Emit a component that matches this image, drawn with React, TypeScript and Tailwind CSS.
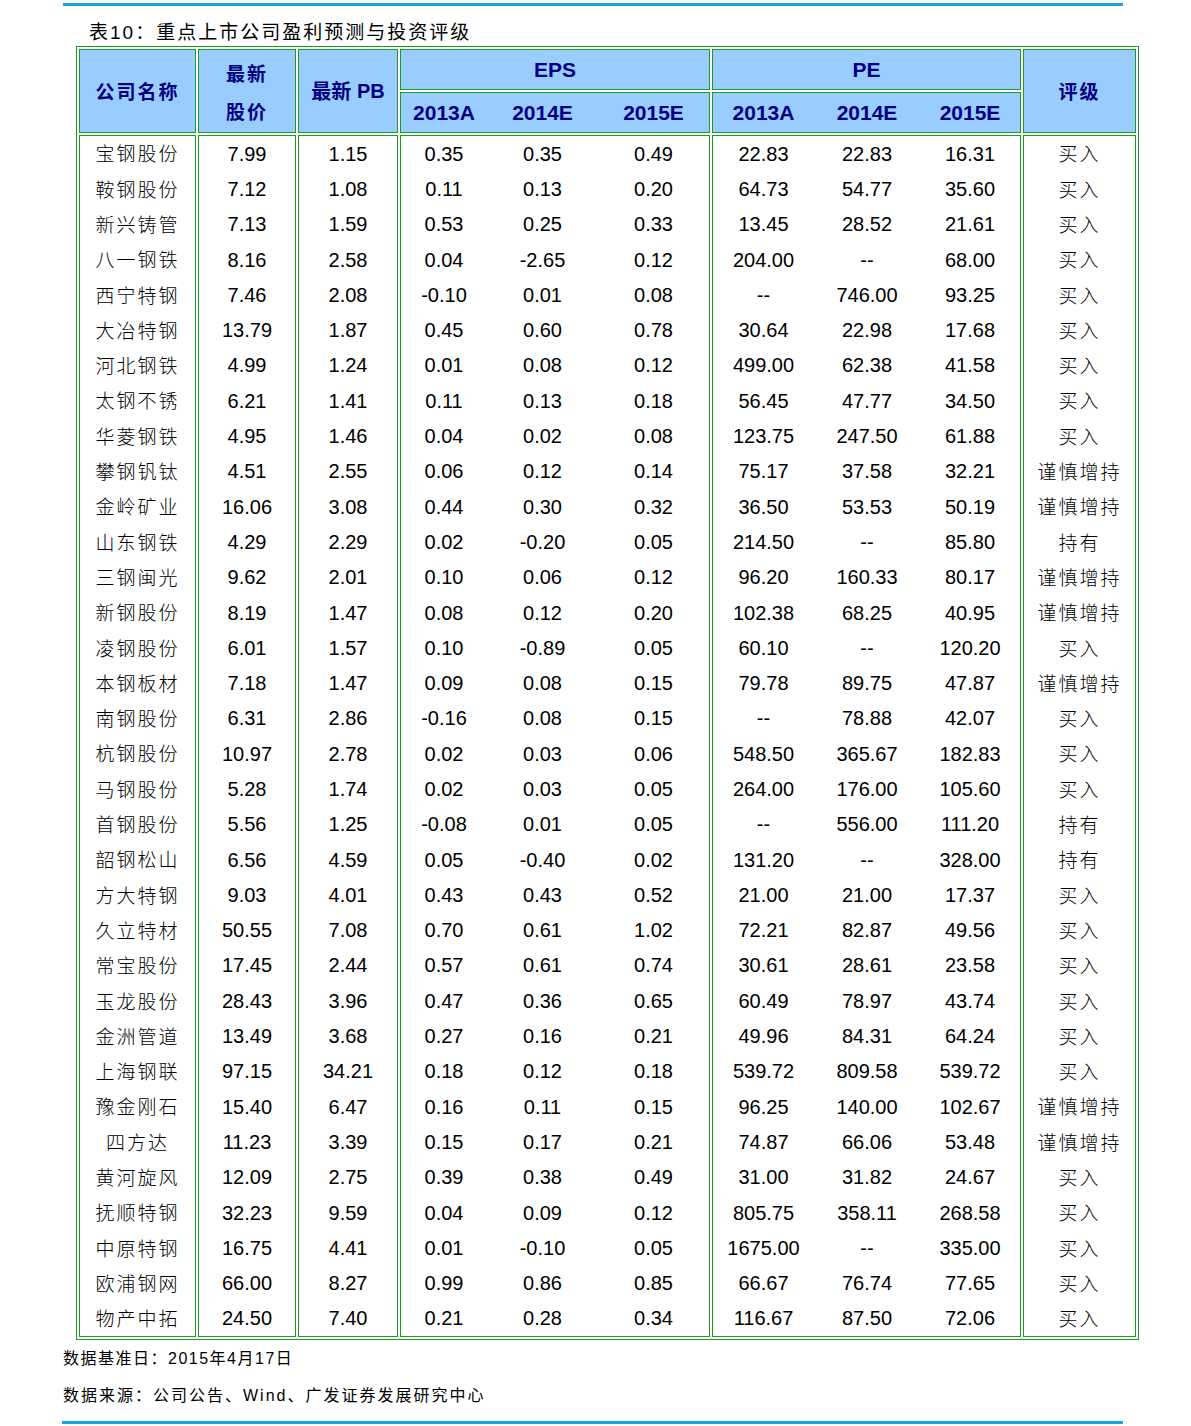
type Row = [string, string, string, string, string, string, string, string, string, string];

const rows: Row[] = [
    ['宝钢股份', '7.99', '1.15', '0.35', '0.35', '0.49', '22.83', '22.83', '16.31', '买入'],
    ['鞍钢股份', '7.12', '1.08', '0.11', '0.13', '0.20', '64.73', '54.77', '35.60', '买入'],
    ['新兴铸管', '7.13', '1.59', '0.53', '0.25', '0.33', '13.45', '28.52', '21.61', '买入'],
    ['八一钢铁', '8.16', '2.58', '0.04', '-2.65', '0.12', '204.00', '--', '68.00', '买入'],
    ['西宁特钢', '7.46', '2.08', '-0.10', '0.01', '0.08', '--', '746.00', '93.25', '买入'],
    ['大冶特钢', '13.79', '1.87', '0.45', '0.60', '0.78', '30.64', '22.98', '17.68', '买入'],
    ['河北钢铁', '4.99', '1.24', '0.01', '0.08', '0.12', '499.00', '62.38', '41.58', '买入'],
    ['太钢不锈', '6.21', '1.41', '0.11', '0.13', '0.18', '56.45', '47.77', '34.50', '买入'],
    ['华菱钢铁', '4.95', '1.46', '0.04', '0.02', '0.08', '123.75', '247.50', '61.88', '买入'],
    ['攀钢钒钛', '4.51', '2.55', '0.06', '0.12', '0.14', '75.17', '37.58', '32.21', '谨慎增持'],
    ['金岭矿业', '16.06', '3.08', '0.44', '0.30', '0.32', '36.50', '53.53', '50.19', '谨慎增持'],
    ['山东钢铁', '4.29', '2.29', '0.02', '-0.20', '0.05', '214.50', '--', '85.80', '持有'],
    ['三钢闽光', '9.62', '2.01', '0.10', '0.06', '0.12', '96.20', '160.33', '80.17', '谨慎增持'],
    ['新钢股份', '8.19', '1.47', '0.08', '0.12', '0.20', '102.38', '68.25', '40.95', '谨慎增持'],
    ['凌钢股份', '6.01', '1.57', '0.10', '-0.89', '0.05', '60.10', '--', '120.20', '买入'],
    ['本钢板材', '7.18', '1.47', '0.09', '0.08', '0.15', '79.78', '89.75', '47.87', '谨慎增持'],
    ['南钢股份', '6.31', '2.86', '-0.16', '0.08', '0.15', '--', '78.88', '42.07', '买入'],
    ['杭钢股份', '10.97', '2.78', '0.02', '0.03', '0.06', '548.50', '365.67', '182.83', '买入'],
    ['马钢股份', '5.28', '1.74', '0.02', '0.03', '0.05', '264.00', '176.00', '105.60', '买入'],
    ['首钢股份', '5.56', '1.25', '-0.08', '0.01', '0.05', '--', '556.00', '111.20', '持有'],
    ['韶钢松山', '6.56', '4.59', '0.05', '-0.40', '0.02', '131.20', '--', '328.00', '持有'],
    ['方大特钢', '9.03', '4.01', '0.43', '0.43', '0.52', '21.00', '21.00', '17.37', '买入'],
    ['久立特材', '50.55', '7.08', '0.70', '0.61', '1.02', '72.21', '82.87', '49.56', '买入'],
    ['常宝股份', '17.45', '2.44', '0.57', '0.61', '0.74', '30.61', '28.61', '23.58', '买入'],
    ['玉龙股份', '28.43', '3.96', '0.47', '0.36', '0.65', '60.49', '78.97', '43.74', '买入'],
    ['金洲管道', '13.49', '3.68', '0.27', '0.16', '0.21', '49.96', '84.31', '64.24', '买入'],
    ['上海钢联', '97.15', '34.21', '0.18', '0.12', '0.18', '539.72', '809.58', '539.72', '买入'],
    ['豫金刚石', '15.40', '6.47', '0.16', '0.11', '0.15', '96.25', '140.00', '102.67', '谨慎增持'],
    ['四方达', '11.23', '3.39', '0.15', '0.17', '0.21', '74.87', '66.06', '53.48', '谨慎增持'],
    ['黄河旋风', '12.09', '2.75', '0.39', '0.38', '0.49', '31.00', '31.82', '24.67', '买入'],
    ['抚顺特钢', '32.23', '9.59', '0.04', '0.09', '0.12', '805.75', '358.11', '268.58', '买入'],
    ['中原特钢', '16.75', '4.41', '0.01', '-0.10', '0.05', '1675.00', '--', '335.00', '买入'],
    ['欧浦钢网', '66.00', '8.27', '0.99', '0.86', '0.85', '66.67', '76.74', '77.65', '买入'],
    ['物产中拓', '24.50', '7.40', '0.21', '0.28', '0.34', '116.67', '87.50', '72.06', '买入'],
];

const cjk = "font-['Noto_Sans_CJK_SC',sans-serif]";
const latin = "font-['Liberation_Sans','Noto_Sans_CJK_SC',sans-serif]";
const box = 'border border-[#1e9a1e]';

function TextCell({ text }: { text: string }) {
    return <div className={`flex h-[35.3px] items-center justify-center text-[19px] font-light tracking-[2px] text-black ${cjk}`}>{text}</div>;
}

function NumCell({ text, width }: { text: string; width?: string }) {
    return <div className={`flex h-[35.3px] items-center justify-center text-[20px] text-black ${latin} ${width ?? ''}`}>{text}</div>;
}

export default function App() {
    const epsW = ['w-[86px]', 'w-[111px]', 'w-[111px]'];
    const peW = ['w-[101px]', 'w-[106px]', 'w-[100px]'];

    return (
        <div className="relative h-[1426px] w-[1191px] bg-white">
            <div className="ml-[63px] h-[3px] w-[1060px] translate-y-[3px] bg-[#12a4e3]" />

            <div className={`ml-[89px] mt-[20px] text-[19px] tracking-[2px] text-black ${latin} leading-none`}>表10：重点上市公司盈利预测与投资评级</div>

            {/* table */}
            <div className={`ml-[76px] mt-[4px] w-[1063px] p-[2px] ${box}`}>
                {/* header */}
                <div className="flex h-[84px] gap-[2px] text-[#000080]">
                    <div className={`flex w-[117px] items-center justify-center bg-[#99ccff] text-[19px] font-bold tracking-[2px] ${cjk} ${box}`}>公司名称</div>
                    <div className={`flex w-[98px] flex-col items-center justify-center gap-[19px] bg-[#99ccff] text-[19px] font-bold tracking-[2px] leading-none ${cjk} ${box}`}>
                        <span>最新</span>
                        <span>股价</span>
                    </div>
                    <div className={`flex w-[100px] items-center justify-center bg-[#99ccff] text-[20px] font-bold ${latin} ${box}`}>
                        <span className={cjk}>最新</span>&nbsp;PB
                    </div>
                    {[
                        { title: 'EPS', w: 'w-[310px]', subs: epsW },
                        { title: 'PE', w: 'w-[309px]', subs: peW },
                    ].map((g) => (
                        <div key={g.title} className={`flex ${g.w} flex-col gap-[2px]`}>
                            <div className={`flex h-[41px] items-center justify-center bg-[#99ccff] text-[21px] font-bold ${latin} ${box}`}>{g.title}</div>
                            <div className={`flex flex-1 bg-[#99ccff] text-[21px] font-bold ${latin} ${box}`}>
                                {['2013A', '2014E', '2015E'].map((y, i) => (
                                    <div key={y} className={`flex items-center justify-center ${g.subs[i]}`}>
                                        {y}
                                    </div>
                                ))}
                            </div>
                        </div>
                    ))}
                    <div className={`flex flex-1 items-center justify-center bg-[#99ccff] text-[19px] font-bold tracking-[2px] ${cjk} ${box}`}>评级</div>
                </div>

                {/* body */}
                <div className="mt-[2px] flex gap-[2px]">
                    <div className={`w-[117px] ${box}`}>
                        {rows.map((r) => (
                            <TextCell key={r[0]} text={r[0]} />
                        ))}
                    </div>
                    <div className={`w-[98px] ${box}`}>
                        {rows.map((r) => (
                            <NumCell key={r[0]} text={r[1]} />
                        ))}
                    </div>
                    <div className={`w-[100px] ${box}`}>
                        {rows.map((r) => (
                            <NumCell key={r[0]} text={r[2]} />
                        ))}
                    </div>
                    <div className={`w-[310px] ${box}`}>
                        {rows.map((r) => (
                            <div key={r[0]} className="flex">
                                <NumCell text={r[3]} width={epsW[0]} />
                                <NumCell text={r[4]} width={epsW[1]} />
                                <NumCell text={r[5]} width={epsW[2]} />
                            </div>
                        ))}
                    </div>
                    <div className={`w-[309px] ${box}`}>
                        {rows.map((r) => (
                            <div key={r[0]} className="flex">
                                <NumCell text={r[6]} width={peW[0]} />
                                <NumCell text={r[7]} width={peW[1]} />
                                <NumCell text={r[8]} width={peW[2]} />
                            </div>
                        ))}
                    </div>
                    <div className={`flex-1 ${box}`}>
                        {rows.map((r) => (
                            <TextCell key={r[0]} text={r[9]} />
                        ))}
                    </div>
                </div>
            </div>

            <div className={`ml-[63px] mt-[7px] text-[16px] tracking-[1.5px] text-black ${latin}`}>数据基准日：2015年4月17日</div>
            <div className={`ml-[63px] mt-[13px] text-[16px] tracking-[2px] text-black ${latin}`}>数据来源：公司公告、Wind、广发证券发展研究中心</div>

            <div className="absolute left-[62px] top-[1421px] h-[3px] w-[1061px] bg-[#12a4e3]" />
        </div>
    );
}
